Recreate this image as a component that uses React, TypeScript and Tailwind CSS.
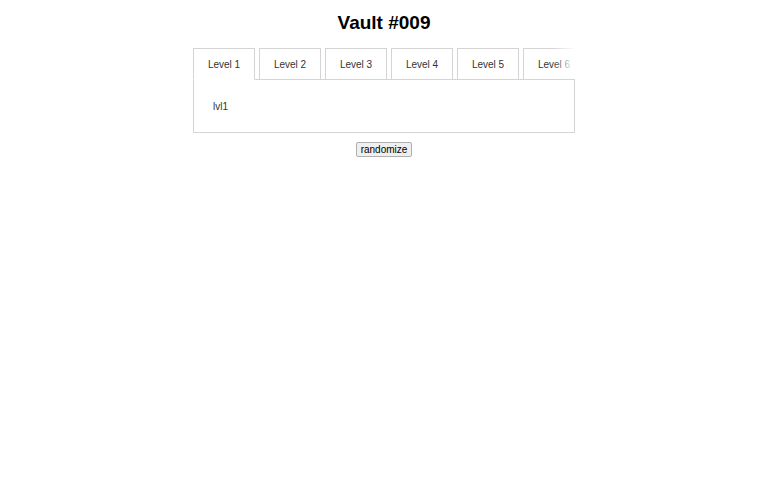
import React, { useState } from 'react';

const levels = ['Level 1', 'Level 2', 'Level 3', 'Level 4', 'Level 5', 'Level 6'];

export default function App() {
    const [active, setActive] = useState(0);
    const [vault, setVault] = useState(9);

    const randomize = () => setVault(Math.floor(Math.random() * 1000));

    return (
        <div className="min-h-screen bg-white flex flex-col items-center font-['Liberation_Sans',Arial,sans-serif] text-[#222]">
            <h1 className="mt-[11px] text-[19px] leading-[24px] font-bold text-black">
                Vault #{String(vault).padStart(3, '0')}
            </h1>

            <div className="w-[382px] mt-[13px]">
                {/* tab strip, clipped on the right with a fade */}
                <div className="relative z-10 h-[32px]">
                    <div className="flex items-end gap-1 h-[32px] overflow-hidden">
                        {levels.map((lvl, i) => (
                            <button
                                key={lvl}
                                type="button"
                                onClick={() => setActive(i)}
                                className={
                                    i === active
                                        ? 'shrink-0 w-[62px] h-[32px] border border-[#d4d4d4] border-b-white bg-white text-[10px] text-[#333] flex items-center justify-center pt-px'
                                        : 'shrink-0 w-[62px] h-[32px] border border-[#d4d4d4] bg-white text-[10px] text-[#333] flex items-center justify-center pt-px'
                                }
                            >
                                {lvl}
                            </button>
                        ))}
                    </div>
                    <div className="absolute right-0 top-0 h-[31px] w-[22px] bg-gradient-to-l from-white to-transparent pointer-events-none" />
                </div>

                <div className="-mt-px border border-[#d4d4d4] h-[54px] px-[19px] flex items-center">
                    <span className="text-[10px] text-[#333]">lvl{active + 1}</span>
                </div>
            </div>

            <button
                type="button"
                onClick={randomize}
                className="mt-[9px] h-[15px] px-[4px] bg-[#efefef] border border-[#b0b0b0] rounded-[2px] text-[10px] leading-[12px] text-black"
            >
                randomize
            </button>
        </div>
    );
}
